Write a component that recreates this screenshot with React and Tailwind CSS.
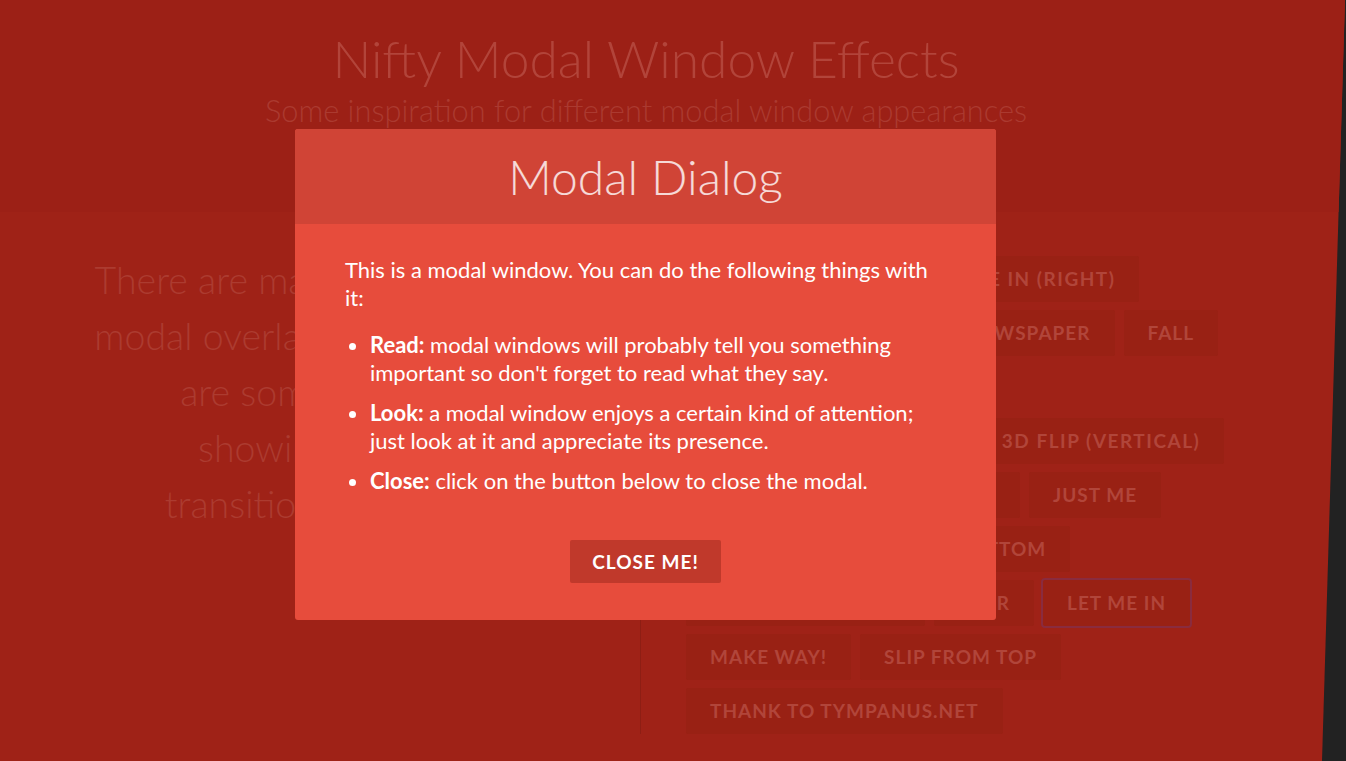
import React from "react";

const rows = [
  ["Fade in & Scale", "Slide in (right)"],
  ["Slide in (bottom)", "Newspaper", "Fall"],
  ["Side Fall", "Sticky Up"],
  ["3D Flip (horizontal)", "3D Flip (vertical)"],
  ["3D Sign", "Super Scaled", "Just Me"],
  ["3D Slit", "3D Rotate Bottom"],
  ["3D Rotate In Left", "Blur", "Let me in"],
  ["Make way!", "Slip from top"],
  ["Thank to tympanus.net"],
];

function BgButton({ label }) {
  const focused = label === "Let me in";
  const wide = label.includes("(") || label.includes("&");
  return (
    <span
      className={
        "inline-block rounded-[2px] bg-[#992114] px-[24px] py-[11px] text-[19px] font-bold uppercase leading-[24px] text-[#b1453a] whitespace-nowrap " +
        (wide ? "tracking-[1.5px] " : "tracking-[1px] ") +
        (focused ? "outline-2 outline-[#8a2b3e]" : "")
      }
    >
      {label}
    </span>
  );
}

export default function App() {
  return (
    <div className="relative h-[761px] w-full overflow-hidden bg-[#222222] font-['Lato',sans-serif]">
      <div className="h-full bg-[#9f2217] [clip-path:polygon(0_0,1345px_0,1322px_100%,0_100%)]">
        <header className="h-[212px] bg-[#9c2016] pt-[26px] pr-[54px] text-center">
          <h1 className="text-[51.5px] font-light leading-[65px] text-[#b2443a]">
            Nifty Modal Window Effects
          </h1>
          <p className="text-[30.8px] font-light leading-[40px] text-[#ab3a30]">
            Some inspiration for different modal window appearances
          </p>
        </header>
        <main className="flex pt-[37px]">
          <div className="w-[641px] shrink-0 pt-[3px] pr-[45px] text-right">
            <p className="text-[37.5px] font-light leading-[56px] text-[#ac3b30]">
              There are many possibilities for
              <br />
              modal overlays to appear. Here
              <br />
              are some modern ways of
              <br />
              showing them using CSS
              <br />
              transitions and animations.
            </p>
          </div>
          <div className="flex flex-1 flex-col gap-[8px] pt-[7px] pl-[45px] shadow-[-1px_0_0_rgba(0,0,0,0.1)]">
            {rows.map((row, i) => (
              <div key={i} className="flex gap-[9px]">
                {row.map((label) => (
                  <BgButton key={label} label={label} />
                ))}
              </div>
            ))}
          </div>
        </main>
      </div>

      <div className="absolute left-[295px] top-[129px] w-[701px] overflow-hidden rounded-[3px] bg-[#e74c3c] text-white">
        <h3 className="bg-[#d04436] py-[19px] text-center text-[48px] font-light leading-[57px] text-white/80">
          Modal Dialog
        </h3>
        <div className="px-[50px] pt-[32px] pb-[37px] text-[22px] leading-[28px]">
          <p>
            This is a modal window. You can do the following things with it:
          </p>
          <ul className="mt-[19px] flex list-disc flex-col gap-[12px] pl-[25px]">
            <li>
              <strong className="font-bold">Read:</strong> modal windows will
              probably tell you something important so don't forget to read
              what they say.
            </li>
            <li>
              <strong className="font-bold">Look:</strong> a modal window
              enjoys a certain kind of attention; just look at it and
              appreciate its presence.
            </li>
            <li>
              <strong className="font-bold">Close:</strong> click on the button
              below to close the modal.
            </li>
          </ul>
          <div className="mt-[45px] flex justify-center">
            <button className="rounded-[2px] bg-[#c0392b] px-[22px] py-[11px] text-[19px] font-bold uppercase leading-[21px] tracking-[1px] text-white">
              Close me!
            </button>
          </div>
        </div>
      </div>
    </div>
  );
}
